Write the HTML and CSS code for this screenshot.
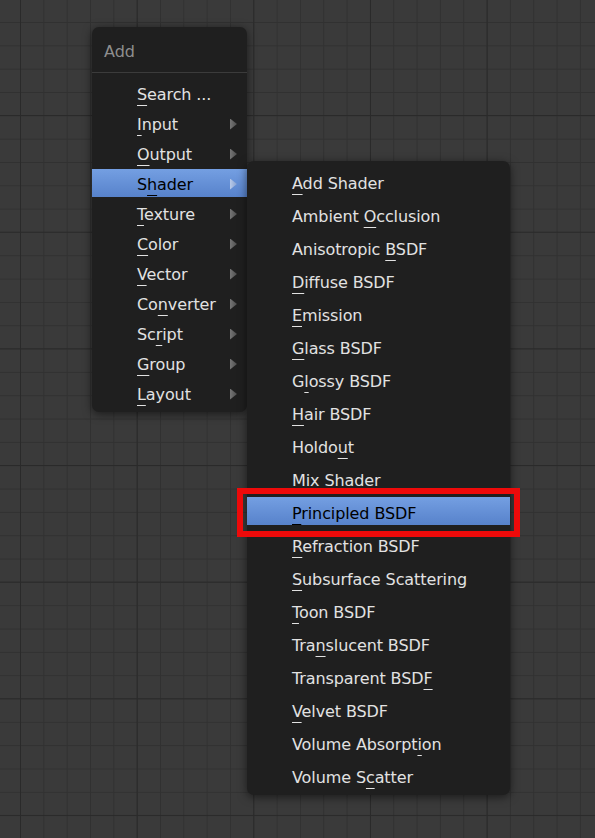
FILE: index.html
```html
<!DOCTYPE html>
<html lang="en">
<head>
    <meta charset="UTF-8">
    <meta name="viewport" content="width=device-width, initial-scale=1.0">
    <title>Add Node Menu</title>
    <link rel="stylesheet" href="styles.css">
</head>
<body>

    <!-- Add menu -->
    <div class="menu menu-add">
        <div class="menu-title">Add</div>
        <ul class="menu-list">
            <li class="menu-item"><span><u>S</u>earch ...</span></li>
            <li class="menu-item"><span><u>I</u>nput</span><i class="arrow"></i></li>
            <li class="menu-item"><span><u>O</u>utput</span><i class="arrow"></i></li>
            <li class="menu-item active"><span>S<u>h</u>ader</span><i class="arrow"></i></li>
            <li class="menu-item"><span><u>T</u>exture</span><i class="arrow"></i></li>
            <li class="menu-item"><span><u>C</u>olor</span><i class="arrow"></i></li>
            <li class="menu-item"><span><u>V</u>ector</span><i class="arrow"></i></li>
            <li class="menu-item"><span>Co<u>n</u>verter</span><i class="arrow"></i></li>
            <li class="menu-item"><span>Sc<u>r</u>ipt</span><i class="arrow"></i></li>
            <li class="menu-item"><span><u>G</u>roup</span><i class="arrow"></i></li>
            <li class="menu-item"><span><u>L</u>ayout</span><i class="arrow"></i></li>
        </ul>
    </div>

    <!-- Shader submenu -->
    <div class="menu menu-shader">
        <ul class="menu-list">
            <li class="menu-item"><span><u>A</u>dd Shader</span></li>
            <li class="menu-item"><span>Ambient <u>O</u>cclusion</span></li>
            <li class="menu-item"><span>Anisotropic <u>B</u>SDF</span></li>
            <li class="menu-item"><span><u>D</u>iffuse BSDF</span></li>
            <li class="menu-item"><span><u>E</u>mission</span></li>
            <li class="menu-item"><span><u>G</u>lass BSDF</span></li>
            <li class="menu-item"><span>G<u>l</u>ossy BSDF</span></li>
            <li class="menu-item"><span><u>H</u>air BSDF</span></li>
            <li class="menu-item"><span>Holdo<u>u</u>t</span></li>
            <li class="menu-item"><span><u>M</u>ix Shader</span></li>
            <li class="menu-item active"><span><u>P</u>rincipled BSDF</span></li>
            <li class="menu-item"><span><u>R</u>efraction BSDF</span></li>
            <li class="menu-item"><span><u>S</u>ubsurface Scattering</span></li>
            <li class="menu-item"><span><u>T</u>oon BSDF</span></li>
            <li class="menu-item"><span>Tra<u>n</u>slucent BSDF</span></li>
            <li class="menu-item"><span>Transparent BSD<u>F</u></span></li>
            <li class="menu-item"><span><u>V</u>elvet BSDF</span></li>
            <li class="menu-item"><span>Volume Absorpt<u>i</u>on</span></li>
            <li class="menu-item"><span>Volume S<u>c</u>atter</span></li>
        </ul>
    </div>

    <!-- highlight marker around the chosen entry -->
    <div class="callout"></div>

</body>
</html>
```

FILE: styles.css
```css
body {
    margin: 0;
    width: 595px;
    height: 838px;
    overflow: hidden;
    position: relative;
    font-family: 'DejaVu Sans', 'Liberation Sans', sans-serif;
    font-size: 16px;
    background-color: #3a3a3a;
    background-image:
        linear-gradient(to right, #2a2a2a 1px, transparent 1px),
        linear-gradient(to bottom, #2a2a2a 1px, transparent 1px),
        linear-gradient(to right, #313131 1px, transparent 1px),
        linear-gradient(to bottom, #313131 1px, transparent 1px);
    background-size:
        116.67px 116.67px,
        116.67px 116.67px,
        23.333px 23.333px,
        23.333px 23.333px;
    background-position:
        20px 115px,
        20px 115px,
        20px 22px,
        20px 22px;
}

.menu {
    position: absolute;
    background: #1f1f1f;
    border-radius: 7px;
    box-shadow: 0 2px 10px rgba(0, 0, 0, 0.55);
    color: #e2e2e2;
}

.menu-add {
    left: 92px;
    top: 27px;
    width: 155px;
}

.menu-shader {
    left: 247px;
    top: 161px;
    width: 263px;
}

.menu-title {
    height: 41px;
    line-height: 41px;
    padding: 4px 12px 0;
    color: #8e8e8e;
    border-bottom: 1px solid #3b3b3b;
}

.menu-list {
    list-style: none;
    margin: 0;
    padding: 0;
}

.menu-add .menu-list {
    padding: 6px 0 3px;
}

.menu-shader .menu-list {
    padding: 6px 0 1px;
}

.menu-item {
    display: flex;
    align-items: center;
    justify-content: space-between;
    padding: 0 10px 0 45px;
    white-space: nowrap;
    letter-spacing: -0.1px;
}

.menu-add .menu-item {
    height: 30px;
}

.menu-shader .menu-item {
    height: 33px;
}

.menu-item u {
    text-decoration: underline;
    text-decoration-thickness: 1px;
    text-underline-offset: 5px;
}

.menu-item.active {
    color: #000;
    background: linear-gradient(to bottom, #749fe2, #5782cb) no-repeat;
    background-size: 100% 28px;
}

.arrow {
    width: 7px;
    height: 11px;
    clip-path: polygon(0 0, 100% 50%, 0 100%);
    background: linear-gradient(to right, #757575, #4e4e4e);
}

.menu-item.active .arrow {
    background: linear-gradient(to right, #b8cae9, #86a1d0);
}

.callout {
    position: absolute;
    left: 237px;
    top: 488px;
    width: 283px;
    height: 49px;
    box-sizing: border-box;
    border: 6px solid #ee0a0a;
}
```
